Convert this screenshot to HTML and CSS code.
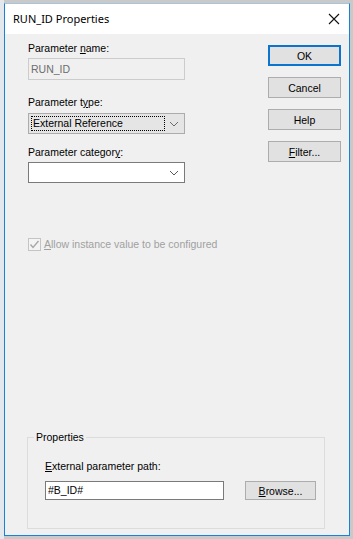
FILE: index.html
```html
<!DOCTYPE html>
<html lang="en">
  <head>
    <meta charset="UTF-8" />
    <meta name="viewport" content="width=device-width, initial-scale=1.0" />
    <title>RUN_ID Properties</title>
    <link rel="stylesheet" href="styles.css">
  </head>
  <body>
    <!-- Dialog window -->
    <div class="window">
      <div class="titlebar">
        <span class="caption">RUN_ID Properties</span>
        <svg class="close" width="12" height="12" viewBox="0 0 12 12">
          <path d="M1 1 L11 11 M11 1 L1 11" stroke="#111" stroke-width="1.1" fill="none" />
        </svg>
      </div>

      <div class="client">
        <div class="main">
          <div class="fields">
            <p class="label">Parameter <u>n</u>ame:</p>
            <div class="edit disabled name-edit">RUN_ID</div>

            <p class="label type-label">Parameter t<u>y</u>pe:</p>
            <div class="combo gray">
              <span class="focus">External Reference</span>
              <svg class="arrow" width="10" height="6" viewBox="0 0 10 6">
                <path d="M1 1 L5 5 L9 1" stroke="#6a6a6a" stroke-width="1" fill="none" />
              </svg>
            </div>

            <p class="label cat-label">Parameter categor<u>y</u>:</p>
            <div class="combo white">
              <span class="blank"></span>
              <svg class="arrow" width="10" height="6" viewBox="0 0 10 6">
                <path d="M1 1 L5 5 L9 1" stroke="#5a5a5a" stroke-width="1" fill="none" />
              </svg>
            </div>

            <div class="check">
              <svg class="box" width="13" height="13" viewBox="0 0 13 13">
                <rect x="0.5" y="0.5" width="12" height="12" fill="#f4f4f4" stroke="#c4c4c4" />
                <path d="M2.5 6.5 L5 9.5 L10.5 3" stroke="#a8a8a8" stroke-width="1.4" fill="none" />
              </svg>
              <span class="check-text"><u>A</u>llow instance value to be configured</span>
            </div>
          </div>

          <div class="buttons">
            <button class="btn default">OK</button>
            <button class="btn">Cancel</button>
            <button class="btn">Help</button>
            <button class="btn"><u>F</u>ilter...</button>
          </div>
        </div>

        <fieldset class="group">
          <legend>Properties</legend>
          <div class="group-row">
            <div class="path">
              <p class="label"><u>E</u>xternal parameter path:</p>
              <div class="edit path-edit">#B_ID#</div>
            </div>
            <button class="btn browse"><u>B</u>rowse...</button>
          </div>
        </fieldset>
      </div>
    </div>
  </body>
</html>
```

FILE: styles.css
```css
body {
  margin: 0;
  width: 353px;
  height: 539px;
  overflow: hidden;
  background: linear-gradient(to right, #e3e8ed 0, #e3e8ed 4px, #c9c9c9 4px);
  font-family: "Liberation Sans", Arial, sans-serif;
  font-size: 10.5px;
  color: #000;
}
.window {
  margin: 3px 0 0 4px;
  width: 346px;
  height: 533px;
  box-sizing: border-box;
  border: 1px solid #1c80d6;
  border-top-color: #a9c3dc;
  background-color: #f0f0f0;
  display: flex;
  flex-direction: column;
}
.titlebar {
  height: 30px;
  background-color: #ffffff;
  display: flex;
  align-items: center;
  justify-content: space-between;
  padding: 0 9px 0 8px;
}
.caption {
  font-family: "Noto Sans", "Open Sans", sans-serif;
  font-size: 11px;
  color: #000;
  margin-top: -1px;
}
.client {
  flex: 1;
  display: flex;
  flex-direction: column;
  padding-left: 23px;
}
.main {
  display: flex;
  align-items: flex-start;
}
.fields {
  width: 157px;
  padding-top: 8px;
  display: flex;
  flex-direction: column;
}
.label {
  margin: 0;
  line-height: 13px;
  white-space: nowrap;
}
.edit {
  height: 22px;
  box-sizing: border-box;
  border: 1px solid #7a7a7a;
  background-color: #fff;
  padding: 0 2px;
  display: flex;
  align-items: center;
  line-height: 13px;
}
.name-edit {
  margin-top: 3px;
}
.disabled {
  background-color: #f0f0f0;
  border-color: #cccccc;
  color: #6d6d6d;
}
.type-label {
  margin-top: 16px;
}
.cat-label {
  margin-top: 12px;
}
.combo {
  height: 21px;
  box-sizing: border-box;
  border: 1px solid #acacac;
  display: flex;
  align-items: center;
  justify-content: space-between;
  padding: 0 5px 0 2px;
}
.type-label + .combo {
  margin-top: 4px;
}
.cat-label + .combo {
  margin-top: 3px;
}
.combo.gray {
  background-color: #e5e5e5;
}
.combo.white {
  background-color: #fff;
  border-color: #7a7a7a;
}
.focus {
  width: 134px;
  height: 15px;
  box-sizing: border-box;
  border: 1px dotted #000;
  line-height: 13px;
  padding-left: 1px;
}
.check {
  margin-top: 55px;
  display: flex;
  align-items: center;
  gap: 3px;
  white-space: nowrap;
}
.check .box {
  flex-shrink: 0;
}
.check-text {
  color: #a0a0a0;
  line-height: 13px;
}
.buttons {
  margin-left: 83px;
  padding-top: 11px;
  display: flex;
  flex-direction: column;
  gap: 11px;
}
.btn {
  width: 73px;
  height: 21px;
  box-sizing: border-box;
  border: 1px solid #adadad;
  background-color: #e1e1e1;
  font-family: "Liberation Sans", Arial, sans-serif;
  font-size: 10.5px;
  color: #000;
  padding: 0;
}
.btn.default {
  border: 2px solid #0a74cf;
}
.group {
  margin: auto 0 6px -1px;
  width: 298px;
  height: 98px;
  box-sizing: border-box;
  border: 1px solid #dcdcdc;
  padding: 0 0 0 6px;
}
.group legend {
  padding: 0 2px;
  line-height: 13px;
}
.group-row {
  display: flex;
  align-items: flex-end;
  padding-top: 16px;
  padding-left: 11px;
}
.path {
  width: 179px;
  display: flex;
  flex-direction: column;
}
.path-edit {
  margin-top: 8px;
  height: 19px;
}
.browse {
  margin-left: 21px;
  width: 71px;
  height: 19px;
}
```
